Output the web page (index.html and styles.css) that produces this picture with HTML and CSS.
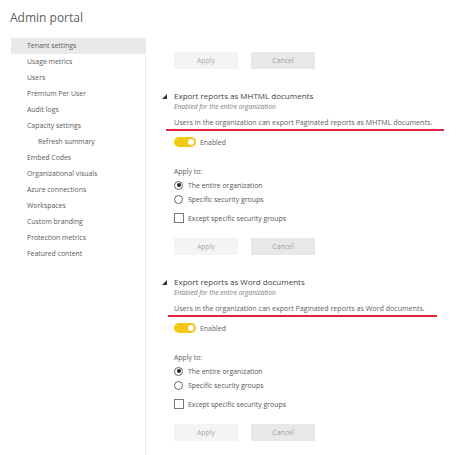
FILE: index.html
```html
<!DOCTYPE html>
<html>
<head>
<meta charset="utf-8">
<link rel="stylesheet" href="styles.css">
</head>
<body>
<header class="page-title">Admin portal</header>
<div class="layout">
  <nav class="sidebar">
    <div class="nav-item selected">Tenant settings</div>
    <div class="nav-item">Usage metrics</div>
    <div class="nav-item">Users</div>
    <div class="nav-item">Premium Per User</div>
    <div class="nav-item">Audit logs</div>
    <div class="nav-item">Capacity settings</div>
    <div class="nav-item sub">Refresh summary</div>
    <div class="nav-item">Embed Codes</div>
    <div class="nav-item">Organizational visuals</div>
    <div class="nav-item">Azure connections</div>
    <div class="nav-item">Workspaces</div>
    <div class="nav-item">Custom branding</div>
    <div class="nav-item">Protection metrics</div>
    <div class="nav-item">Featured content</div>
  </nav>
  <main class="content">
    <div class="actions">
      <button class="btn btn-apply">Apply</button>
      <button class="btn btn-cancel">Cancel</button>
    </div>

    <section class="setting">
      <div class="setting-head">
        <svg class="caret" width="5" height="5" viewBox="0 0 5 5"><polygon points="5,0 5,5 0,5" fill="#333"/></svg>
        <span class="setting-title">Export reports as MHTML documents</span>
      </div>
      <div class="setting-sub">Enabled for the entire organization</div>
      <div class="setting-desc">Users in the organization can export Paginated reports as MHTML documents.</div>
      <div class="redline"></div>
      <div class="toggle-row">
        <span class="toggle"><span class="knob"></span></span>
        <span class="toggle-label">Enabled</span>
      </div>
      <div class="apply-to">Apply to:</div>
      <div class="option"><span class="radio checked"></span>The entire organization</div>
      <div class="option"><span class="radio"></span>Specific security groups</div>
      <div class="option check-row"><span class="checkbox"></span>Except specific security groups</div>
      <div class="actions spaced">
        <button class="btn btn-apply">Apply</button>
        <button class="btn btn-cancel">Cancel</button>
      </div>
    </section>

    <section class="setting">
      <div class="setting-head">
        <svg class="caret" width="5" height="5" viewBox="0 0 5 5"><polygon points="5,0 5,5 0,5" fill="#333"/></svg>
        <span class="setting-title">Export reports as Word documents</span>
      </div>
      <div class="setting-sub">Enabled for the entire organization</div>
      <div class="setting-desc">Users in the organization can export Paginated reports as Word documents.</div>
      <div class="redline redline-short"></div>
      <div class="toggle-row">
        <span class="toggle"><span class="knob"></span></span>
        <span class="toggle-label">Enabled</span>
      </div>
      <div class="apply-to">Apply to:</div>
      <div class="option"><span class="radio checked"></span>The entire organization</div>
      <div class="option"><span class="radio"></span>Specific security groups</div>
      <div class="option check-row"><span class="checkbox"></span>Except specific security groups</div>
      <div class="actions spaced">
        <button class="btn btn-apply">Apply</button>
        <button class="btn btn-cancel">Cancel</button>
      </div>
    </section>
  </main>
</div>
</body>
</html>
```

FILE: styles.css
```css
* { box-sizing: border-box; }

html, body {
  margin: 0;
  padding: 0;
  background: #ffffff;
}

body {
  width: 474px;
  height: 455px;
  overflow: hidden;
  font-family: "Open Sans", "Noto Sans", sans-serif;
  color: #555;
}

.page-title {
  height: 38px;
  padding: 9px 0 0 10px;
  font-size: 12px;
  line-height: 18px;
  font-weight: 400;
  color: #606060;
}

.layout {
  display: flex;
  height: 417px;
}

.sidebar {
  width: 135px;
  margin-left: 11px;
  border-right: 1px solid #ececec;
  flex-shrink: 0;
}

.nav-item {
  height: 16px;
  line-height: 16px;
  padding-left: 16px;
  font-size: 6.9px;
  color: #5a5a5a;
  white-space: nowrap;
}

.nav-item.selected {
  background: #e9e9e9;
  margin-right: -1px;
}

.nav-item.sub {
  padding-left: 27px;
}

.content {
  flex: 1;
  padding: 14px 0 0 28px;
}

.actions {
  display: flex;
  gap: 13px;
}

.actions.spaced {
  margin-top: 13px;
}

.btn {
  width: 64px;
  height: 17px;
  border: none;
  padding: 0;
  font-family: inherit;
  font-size: 6.9px;
  color: #ababab;
}

.btn-apply { background: #f4f4f4; }
.btn-cancel { background: #e8e8e8; color: #a2a2a2; }

.setting {
  margin-top: 21px;
}

.setting-head {
  display: flex;
  align-items: center;
  height: 12px;
}

.caret {
  margin-left: -12px;
  margin-right: 7px;
  margin-top: 1px;
}

.setting-title {
  font-size: 8px;
  line-height: 12px;
  color: #3f3f3f;
  white-space: nowrap;
}

.setting-sub {
  font-size: 6.6px;
  line-height: 10px;
  font-style: italic;
  color: #7a7a7a;
}

.setting-desc {
  margin-top: 3px;
  font-size: 7.1px;
  line-height: 14px;
  color: #616161;
  white-space: nowrap;
}

.redline {
  height: 2px;
  width: 278px;
  margin-left: -8px;
  background: #e0243e;
}

.redline-short {
  width: 269px;
  margin-left: -6px;
}

.toggle-row {
  display: flex;
  align-items: center;
  gap: 4px;
  margin-top: 6px;
  height: 10px;
}

.toggle {
  width: 22px;
  height: 10px;
  border-radius: 5px;
  background: #f2c811;
  display: flex;
  align-items: center;
  justify-content: flex-end;
  padding-right: 2px;
}

.knob {
  width: 6px;
  height: 6px;
  border-radius: 50%;
  background: #fff;
}

.toggle-label {
  font-size: 6.9px;
  color: #616161;
}

.apply-to {
  margin-top: 19px;
  font-size: 6.9px;
  line-height: 12px;
  color: #616161;
}

.option {
  display: flex;
  align-items: center;
  height: 14px;
  font-size: 6.9px;
  color: #555;
  white-space: nowrap;
}

.check-row {
  margin-top: 5px;
}

.radio {
  width: 9px;
  height: 9px;
  border: 1px solid #666;
  border-radius: 50%;
  margin-right: 5px;
  display: flex;
  align-items: center;
  justify-content: center;
}

.radio.checked::after {
  content: "";
  width: 4px;
  height: 4px;
  border-radius: 50%;
  background: #222;
}

.checkbox {
  width: 10px;
  height: 10px;
  border: 1px solid #777;
  margin-right: 4px;
}
```
